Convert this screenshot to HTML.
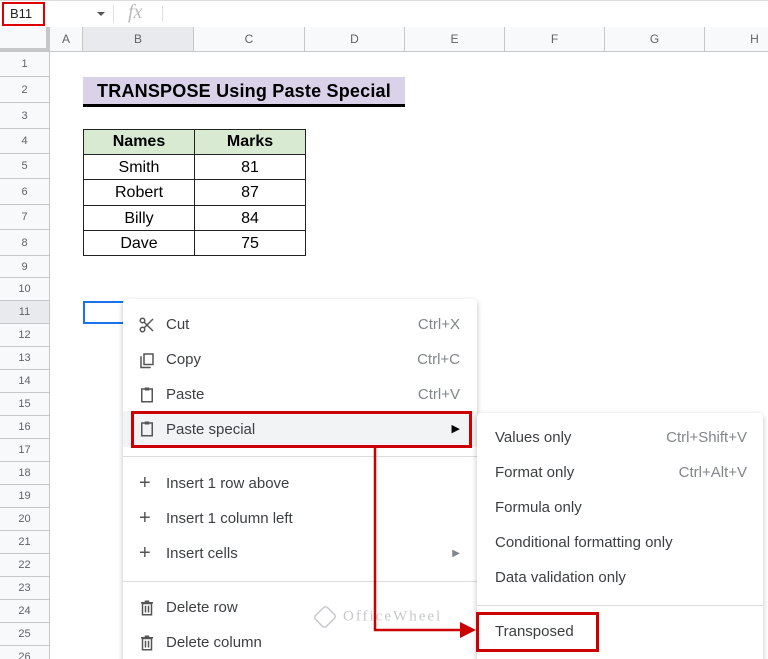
<!DOCTYPE html>
<html><head><style>
html,body{margin:0;width:768px;height:659px;overflow:hidden}
body{background:#fff;font-family:"Liberation Sans",Arial,sans-serif;position:relative}
.a{position:absolute}
.ch{position:absolute;top:27px;height:25px;background:#f8f9fa;border-right:1px solid #c7c7c7;border-bottom:1px solid #c7c7c7;box-sizing:border-box;color:#5f6368;font-size:12px;text-align:center;line-height:25px}
.rh{position:absolute;left:0;width:50px;background:#f8f9fa;border-right:1px solid #c7c7c7;border-bottom:1px solid #c7c7c7;box-sizing:border-box;color:#5f6368;font-size:11px;text-align:center}
.tc{position:absolute;border:1px solid #222;box-sizing:border-box;text-align:center;font-size:16px;color:#000}
.mi{position:absolute;left:0;right:0;height:35px;line-height:35px;font-size:15px;color:#3c4043}
.mi .t{position:absolute;left:43px}
.mi .k{position:absolute;right:17px;color:#80868b}
.si{position:absolute;left:0;right:0;height:35px;line-height:35px;font-size:15px;color:#3c4043}
.si .t{position:absolute;left:18px}
.si .k{position:absolute;right:16px;color:#80868b}
.ic{position:absolute;left:15px;top:9px}
</style></head><body>
<div class="a" style="left:0;top:0;width:768px;height:1px;background:#dadce0"></div>
<div class="a" style="left:2px;top:2px;width:43px;height:24px;border:2px solid #d00;box-sizing:border-box;font-size:13px;line-height:20px;padding-left:6px;color:#222">B11</div>
<div class="a" style="left:97px;top:12px;width:0;height:0;border-left:4px solid transparent;border-right:4px solid transparent;border-top:4px solid #555"></div>
<div class="a" style="left:113px;top:5px;width:1px;height:18px;background:#e0e0e0"></div>
<div class="a" style="left:128px;top:1px;font-family:'Liberation Serif',serif;font-style:italic;font-size:20px;color:#bbb">fx</div>
<div class="a" style="left:162px;top:6px;width:1px;height:16px;background:#e0e0e0"></div>
<div class="ch" style="left:0;width:50px;border-right:4px solid #c7c7c7;border-bottom:4px solid #c7c7c7"></div>
<div class="ch" style="left:50px;width:33px">A</div>
<div class="ch" style="left:83px;width:111px;background:#e8eaed">B</div>
<div class="ch" style="left:194px;width:111px">C</div>
<div class="ch" style="left:305px;width:100px">D</div>
<div class="ch" style="left:405px;width:100px">E</div>
<div class="ch" style="left:505px;width:100px">F</div>
<div class="ch" style="left:605px;width:100px">G</div>
<div class="ch" style="left:705px;width:100px">H</div>
<div class="rh" style="top:52px;height:25px;line-height:25px">1</div>
<div class="rh" style="top:77px;height:26px;line-height:26px">2</div>
<div class="rh" style="top:103px;height:26px;line-height:26px">3</div>
<div class="rh" style="top:129px;height:25px;line-height:25px">4</div>
<div class="rh" style="top:154px;height:25px;line-height:25px">5</div>
<div class="rh" style="top:179px;height:26px;line-height:26px">6</div>
<div class="rh" style="top:205px;height:25px;line-height:25px">7</div>
<div class="rh" style="top:230px;height:26px;line-height:26px">8</div>
<div class="rh" style="top:256px;height:22px;line-height:22px">9</div>
<div class="rh" style="top:278px;height:23px;line-height:23px">10</div>
<div class="rh" style="top:301px;height:23px;line-height:23px;background:#e8eaed">11</div>
<div class="rh" style="top:324px;height:23px;line-height:23px">12</div>
<div class="rh" style="top:347px;height:23px;line-height:23px">13</div>
<div class="rh" style="top:370px;height:23px;line-height:23px">14</div>
<div class="rh" style="top:393px;height:23px;line-height:23px">15</div>
<div class="rh" style="top:416px;height:23px;line-height:23px">16</div>
<div class="rh" style="top:439px;height:23px;line-height:23px">17</div>
<div class="rh" style="top:462px;height:23px;line-height:23px">18</div>
<div class="rh" style="top:485px;height:23px;line-height:23px">19</div>
<div class="rh" style="top:508px;height:23px;line-height:23px">20</div>
<div class="rh" style="top:531px;height:23px;line-height:23px">21</div>
<div class="rh" style="top:554px;height:23px;line-height:23px">22</div>
<div class="rh" style="top:577px;height:23px;line-height:23px">23</div>
<div class="rh" style="top:600px;height:23px;line-height:23px">24</div>
<div class="rh" style="top:623px;height:23px;line-height:23px">25</div>
<div class="rh" style="top:646px;height:23px;line-height:23px">26</div>

<div class="a" style="left:83px;top:77px;width:322px;height:30px;background:#d9d2e9;border-bottom:3px solid #000;box-sizing:border-box;font-weight:bold;font-size:18px;line-height:28px;text-align:center;color:#000;letter-spacing:0.2px">TRANSPOSE Using Paste Special</div>
<div class="a" style="left:83px;top:104px;width:322px;height:3px;background:#000"></div>

<div class="tc" style="left:83px;top:129px;width:112px;height:26px;line-height:24px;background:#d9ead3;font-weight:bold">Names</div>
<div class="tc" style="left:194px;top:129px;width:112px;height:26px;line-height:24px;background:#d9ead3;font-weight:bold">Marks</div>
<div class="tc" style="left:83px;top:154px;width:112px;height:26px;line-height:25px">Smith</div>
<div class="tc" style="left:194px;top:154px;width:112px;height:26px;line-height:25px">81</div>
<div class="tc" style="left:83px;top:179px;width:112px;height:27px;line-height:26px">Robert</div>
<div class="tc" style="left:194px;top:179px;width:112px;height:27px;line-height:26px">87</div>
<div class="tc" style="left:83px;top:205px;width:112px;height:26px;line-height:25px">Billy</div>
<div class="tc" style="left:194px;top:205px;width:112px;height:26px;line-height:25px">84</div>
<div class="tc" style="left:83px;top:230px;width:112px;height:26px;line-height:25px">Dave</div>
<div class="tc" style="left:194px;top:230px;width:112px;height:26px;line-height:25px">75</div>

<div class="a" style="left:83px;top:301px;width:45px;height:23px;border:2px solid #1a73e8;box-sizing:border-box"></div>

<div class="a" style="left:123px;top:299px;width:354px;height:370px;background:#fff;border-radius:4px;box-shadow:0 2px 6px rgba(0,0,0,.25)">
 <div class="mi" style="top:8px"><svg class="ic" width="18" height="18" viewBox="0 0 24 24"><circle cx="6" cy="6" r="3" fill="none" stroke="#555" stroke-width="2"/><circle cx="6" cy="18" r="3" fill="none" stroke="#555" stroke-width="2"/><path d="M8 8L20 20M8 16L20 4" stroke="#555" stroke-width="2"/></svg><span class="t">Cut</span><span class="k">Ctrl+X</span></div>
 <div class="mi" style="top:43px"><svg class="ic" width="18" height="18" viewBox="0 0 24 24"><path d="M8 4h12v14H8z" fill="none" stroke="#555" stroke-width="2"/><path d="M4 7v15h13" fill="none" stroke="#555" stroke-width="2"/></svg><span class="t">Copy</span><span class="k">Ctrl+C</span></div>
 <div class="mi" style="top:78px"><svg class="ic" width="18" height="18" viewBox="0 0 24 24"><path d="M5 4h14v17H5z" fill="none" stroke="#555" stroke-width="2"/><path d="M9 2h6v4H9z" fill="#555"/></svg><span class="t">Paste</span><span class="k">Ctrl+V</span></div>
 <div class="mi" style="top:112px;height:36px;background:#f1f3f4;line-height:37px"><svg class="ic" width="18" height="18" viewBox="0 0 24 24"><path d="M5 4h14v17H5z" fill="none" stroke="#555" stroke-width="2"/><path d="M9 2h6v4H9z" fill="#555"/></svg><span class="t">Paste special</span><span class="k" style="color:#000;font-size:11px">&#9654;</span></div>
 <div class="a" style="left:0;right:0;top:157px;height:1px;background:#dadce0"></div>
 <div class="mi" style="top:167px"><span class="ic" style="top:0;left:16px;font-size:20px;color:#555">+</span><span class="t">Insert 1 row above</span></div>
 <div class="mi" style="top:202px"><span class="ic" style="top:0;left:16px;font-size:20px;color:#555">+</span><span class="t">Insert 1 column left</span></div>
 <div class="mi" style="top:237px"><span class="ic" style="top:0;left:16px;font-size:20px;color:#555">+</span><span class="t">Insert cells</span><span class="k" style="font-size:10px">&#9654;</span></div>
 <div class="a" style="left:0;right:0;top:282px;height:1px;background:#dadce0"></div>
 <div class="mi" style="top:291px"><svg class="ic" width="18" height="18" viewBox="0 0 24 24"><path d="M6 6h12v15H6zM4 5h16M9 3h6M10 9v9M14 9v9" fill="none" stroke="#555" stroke-width="2"/></svg><span class="t">Delete row</span></div>
 <div class="mi" style="top:326px"><svg class="ic" width="18" height="18" viewBox="0 0 24 24"><path d="M6 6h12v15H6zM4 5h16M9 3h6M10 9v9M14 9v9" fill="none" stroke="#555" stroke-width="2"/></svg><span class="t">Delete column</span></div>
</div>
<div class="a" style="left:131px;top:411px;width:341px;height:37px;border:3px solid #c00;box-sizing:border-box"></div>

<div class="a" style="left:477px;top:413px;width:286px;height:260px;background:#fff;border-radius:4px;box-shadow:0 2px 6px rgba(0,0,0,.25)">
 <div class="si" style="top:7px"><span class="t">Values only</span><span class="k">Ctrl+Shift+V</span></div>
 <div class="si" style="top:42px"><span class="t">Format only</span><span class="k">Ctrl+Alt+V</span></div>
 <div class="si" style="top:77px"><span class="t">Formula only</span></div>
 <div class="si" style="top:112px"><span class="t">Conditional formatting only</span></div>
 <div class="si" style="top:147px"><span class="t">Data validation only</span></div>
 <div class="a" style="left:0;right:0;top:192px;height:1px;background:#dadce0"></div>
 <div class="si" style="top:201px"><span class="t">Transposed</span></div>
</div>
<div class="a" style="left:476px;top:612px;width:123px;height:40px;border:3px solid #c00;box-sizing:border-box"></div>

<div class="a" style="left:313px;top:604px;font-family:'Liberation Serif',serif;font-size:15px;letter-spacing:2px;color:#c4c8cc"><span style="display:inline-block;width:20px;height:22px;border:2px solid #c4c8cc;border-radius:5px;transform:rotate(45deg) scale(.7);vertical-align:middle;margin-right:6px"></span>OfficeWheel</div>

<svg class="a" style="left:0;top:0" width="768" height="659"><path d="M375 448V630H462" fill="none" stroke="#c00" stroke-width="2.5"/><path d="M460 622L476 630L460 638Z" fill="#c00"/></svg>
</body></html>
